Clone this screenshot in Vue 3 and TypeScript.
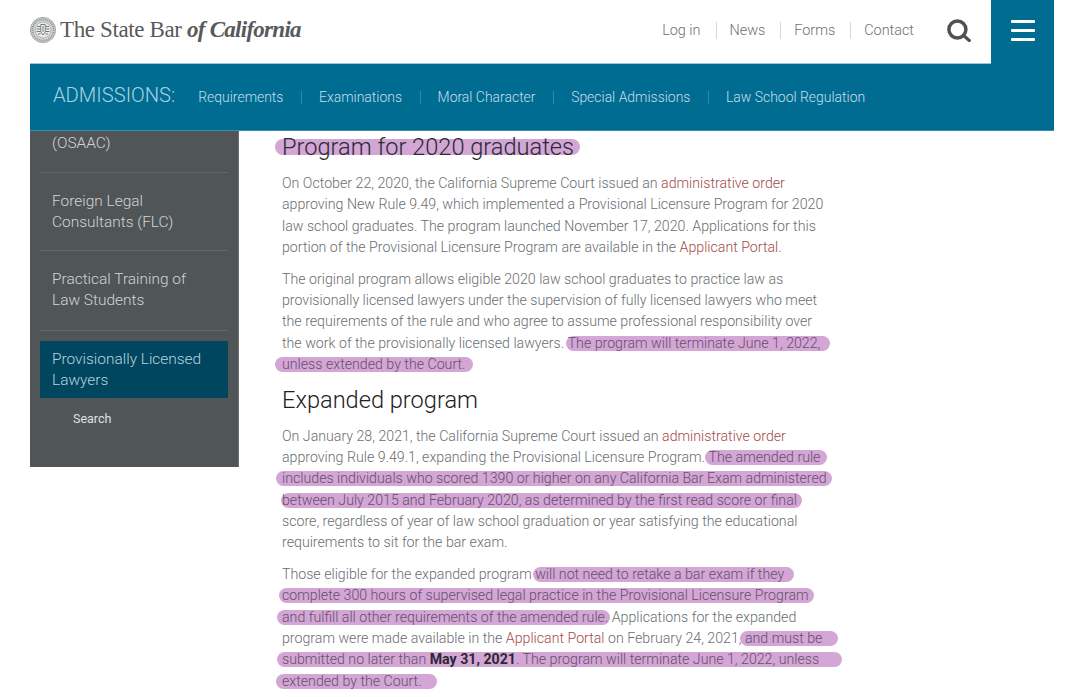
<script setup lang="ts">
const topLinks: string[] = ['Log in', 'News', 'Forms', 'Contact']
const navLinks: string[] = ['Requirements', 'Examinations', 'Moral Character', 'Special Admissions', 'Law School Regulation']
const sideItems: string[][] = [
  ['(OSAAC)'],
  ['Foreign Legal', 'Consultants (FLC)'],
  ['Practical Training of', 'Law Students'],
]
</script>

<template>
  <div class="page">
    <header class="top">
      <div class="top-main">
        <a class="logo">
          <svg class="seal" viewBox="0 0 26 26" width="26" height="26">
            <circle cx="13" cy="13" r="12.6" fill="#d6d7d7" stroke="#8b8d8e" stroke-width="0.7" />
            <circle cx="13" cy="13" r="10.6" fill="none" stroke="#8a8c8d" stroke-width="2" stroke-dasharray="1 1" />
            <circle cx="13" cy="13" r="8" fill="#e9eaea" stroke="#909293" stroke-width="0.6" />
            <path d="M7 9.5h3.5M15.5 9.5H19M6.5 12h4M15.5 12h4M6.5 14.5h4M15.5 14.5h4M8 17h2.5M15.5 17H18" stroke="#77797a" stroke-width="1" />
            <path d="M10.8 7.5h4.4v7.5l-2.2 3-2.2-3z" fill="#f6f6f6" stroke="#5f6162" stroke-width="0.8" />
            <path d="M13 9v6" stroke="#77797a" stroke-width="1" />
          </svg>
          <span class="wordmark">The State Bar <em>of California</em></span>
        </a>
        <nav class="top-links">
          <a v-for="l in topLinks" :key="l">{{ l }}</a>
        </nav>
        <svg class="search" viewBox="0 0 24 24" width="24" height="24">
          <circle cx="10.4" cy="11.4" r="8.5" fill="none" stroke="#4e5254" stroke-width="3.5" />
          <path d="M16.5 17.5l5.8 5" stroke="#4e5254" stroke-width="3.2" stroke-linecap="round" />
        </svg>
      </div>
      <button class="burger" aria-label="Menu"><i></i><i></i><i></i></button>
    </header>

    <nav class="sub">
      <span class="sub-title">ADMISSIONS:</span>
      <a v-for="l in navLinks" :key="l">{{ l }}</a>
    </nav>

    <div class="body">
      <aside class="side">
        <div v-for="(item, i) in sideItems" :key="i" class="side-item">
          <div v-for="t in item" :key="t">{{ t }}</div>
        </div>
        <div class="side-active">Provisionally Licensed<br />Lawyers</div>
        <div class="side-search">Search</div>
      </aside>

      <main class="content">
        <h2 class="h-first"><mark class="hl-h">Program for 2020 graduates</mark></h2>
        <p>On October 22, 2020, the California Supreme Court issued an <a>administrative order</a><br />approving New Rule 9.49, which implemented a Provisional Licensure Program for 2020<br />law school graduates. The program launched November 17, 2020. Applications for this<br />portion of the Provisional Licensure Program are available in the <a>Applicant Portal</a>.</p>
        <p class="before-h">The original program allows eligible 2020 law school graduates to practice law as<br />provisionally licensed lawyers under the supervision of fully licensed lawyers who meet<br />the requirements of the rule and who agree to assume professional responsibility over<br />the work of the provisionally licensed lawyers. <mark class="m1">The program will terminate June 1, 2022,</mark><br /><mark class="m2">unless extended by the Court.</mark></p>
        <h2>Expanded program</h2>
        <p>On January 28, 2021, the California Supreme Court issued an <a>administrative order</a><br />approving Rule 9.49.1, expanding the Provisional Licensure Program. <mark class="m3">The amended rule</mark><br /><mark class="m4">includes individuals who scored 1390 or higher on any California Bar Exam administered</mark><br /><mark class="m5">between July 2015 and February 2020, as determined by the first read score or final</mark><br />score, regardless of year of law school graduation or year satisfying the educational<br />requirements to sit for the bar exam.</p>
        <p>Those eligible for the expanded program <mark class="m6">will not need to retake a bar exam if they</mark><br /><mark class="m7">complete 300 hours of supervised legal practice in the Provisional Licensure Program</mark><br /><mark class="m8">and fulfill all other requirements of the amended rule.</mark> Applications for the expanded<br />program were made available in the <a>Applicant Portal</a> on February 24, 2021, <mark class="m9">and must be</mark><br /><mark class="m10">submitted no later than <strong>May 31, 2021</strong>. The program will terminate June 1, 2022, unless</mark><br /><mark class="m11">extended by the Court.</mark></p>
      </main>
    </div>
  </div>
</template>

<style>
html, body { margin: 0; background: #fff; }
</style>

<style scoped>
.page {
  width: 1024px;
  height: 697px;
  margin-left: 30px;
  overflow: hidden;
  font-family: Roboto, "Liberation Sans", sans-serif;
  font-weight: 300;
}
.top {
  height: 64px;
  display: flex;
}
.top-main {
  flex: 1;
  display: flex;
  align-items: center;
  box-sizing: border-box;
  border-bottom: 1px solid #9cc7d6;
}
.logo { display: flex; align-items: center; gap: 4px; margin-bottom: 3px; }
.seal { display: block; }
.wordmark {
  font-family: "Liberation Serif", serif;
  font-size: 23px;
  font-weight: 400;
  color: #58595b;
  letter-spacing: -0.38px;
  white-space: pre;
}
.wordmark em { font-weight: 700; font-style: italic; letter-spacing: -0.72px; }
.top-links { margin-left: auto; margin-bottom: 3px; display: flex; align-items: center; font-size: 14.4px; color: #6d7173; }
.top-links a { padding: 0 15px 0 13px; border-left: 1px solid #d5d7d8; line-height: 17px; }
.top-links a:first-child { border-left: 0; }
.top-links a:last-child { padding-right: 16px; }
.search { margin: 0 20px 3px 17px; display: block; }
.burger {
  width: 63px;
  height: 64px;
  border: 0;
  padding: 0 0 3px;
  background: #006c91;
  display: flex;
  flex-direction: column;
  align-items: center;
  justify-content: center;
  gap: 6px;
}
.burger i { display: block; width: 24px; height: 3px; background: #fff; border-radius: 1px; }
.sub {
  height: 67px;
  background: #006c91;
  border-bottom: 1px solid #3f8ea9;
  box-sizing: border-box;
  display: flex;
  align-items: center;
  padding-left: 23px;
  color: #c6dfe8;
  font-size: 13.95px;
}
.sub-title { font-size: 20.2px; color: #a9d3e2; margin: 0 6px 4px 0; line-height: 1; }
.sub a { padding: 0 17.6px 0 17px; border-left: 1px solid #2f88a6; line-height: 13px; }
.sub-title + a { border-left: 0; }
.body { display: flex; align-items: flex-start; }
.side {
  width: 209px;
  height: 336px;
  flex: none;
  box-sizing: border-box;
  background: #505557;
  border-right: 1px solid #6b7071;
  padding: 0 10px;
  color: #d2d4d5;
  font-size: 15.45px;
  line-height: 20.7px;
}
.side-item { padding: 18px 12px; border-bottom: 1px solid #636869; }
.side-item:first-child { padding: 1.5px 12px 19px; }
.side-item:nth-child(2) { padding-bottom: 17.5px; }
.side-item:nth-child(3) { padding-bottom: 19.5px; }
.side-active {
  background: #00465e;
  color: #b6d3de;
  margin-top: 10px;
  padding: 8px 12px 7.6px;
}
.side-search { padding: 11px 33px; font-size: 12.5px; font-weight: 400; line-height: 20px; color: #dfe1e1; }
.content {
  margin-left: 43px;
  width: 570px;
  font-size: 14.18px;
  line-height: 21.35px;
  color: #6a6e70;
  white-space: nowrap;
}
h2 {
  margin: 0 0 10px;
  font-size: 23.6px;
  font-weight: 300;
  line-height: 32px;
  color: #222;
}
p { margin: 0 0 10.2px; }
p.before-h { margin-bottom: 8.3px; }
a { color: #a34a4a; }
.top-links a, .sub a { color: inherit; }
mark {
  display: inline-block;
  height: 15px;
  line-height: 15px;
  background: #d3a6d6;
  color: #664f6c;
  border-radius: 7.5px;
  --l: 3px;
  --r: 5px;
  padding: 0 var(--r) 0 var(--l);
  margin: 0 calc(0px - var(--r)) 0 calc(0px - var(--l));
}
.m1 { --l: 2px; --r: 10px; }
.m2 { --l: 7px; --r: 8px; }
.m3 { --l: 4px; --r: 7px; }
.m4 { --l: 6px; --r: 5px; }
.m5 { --l: 1px; --r: 5px; }
.m6 { --l: 2px; --r: 10px; }
.m7 { --l: 3px; --r: 5px; }
.m8 { --l: 5px; --r: 2px; }
.m9 { --l: 5px; --r: 16px; }
.m10 { --l: 5px; --r: 23px; }
.m11 { --l: 6px; --r: 15px; }
.hl-h {
  --l: 7px;
  --r: 6px;
  height: 16px;
  line-height: 16px;
  border-radius: 8px;
  color: #2a2a33;
}
strong { font-weight: 700; color: #2b2830; }
</style>
